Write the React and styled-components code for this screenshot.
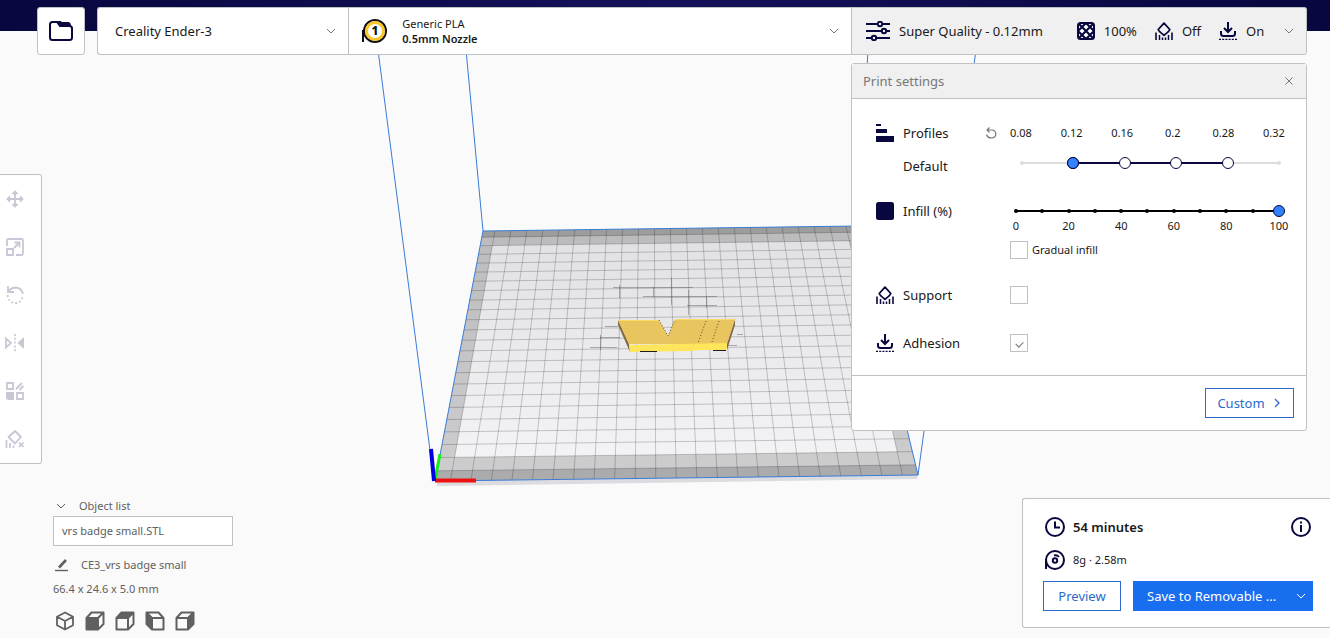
import { useState } from 'react';
import styled, { createGlobalStyle, css } from 'styled-components';

const GlobalStyle = createGlobalStyle`
  :root {
    --navy: #08073f;
    --text: #191919;
    --grey: #777777;
    --line: #c0c1c2;
    --blue: #196ef0;
    --blue-outline: #2a6acb;
    --disabled: #c7c7d6;
  }

  * {
    box-sizing: border-box;
  }

  body {
    margin: 0;
    background: #fafafa;
    color: var(--text);
    font-family: 'Noto Sans', 'Open Sans', sans-serif;
    font-size: 13px;
    line-height: 20px;
  }

  button,
  input {
    margin: 0;
    padding: 0;
    font: inherit;
    color: inherit;
  }

  button {
    border: none;
    background: none;
    cursor: pointer;
  }

  svg {
    display: block;
    flex: none;
  }
`;

/* ---------- icons ---------- */

const Svg = ({ w = 18, h = 18, children, ...rest }) => (
  <svg width={w} height={h} viewBox={`0 0 ${w} ${h}`} fill="none" stroke="currentColor" aria-hidden="true" {...rest}>
    {children}
  </svg>
);

const FolderIcon = () => (
  <Svg w={24} h={20} strokeWidth="2">
    <path d="M1 3.500Q1 1 3.500 1H8l3 4h9.500Q23 5 23 7.500V16.500Q23 19 20.500 19H3.500Q1 19 1 16.500Z" />
    <path d="M8 0H11.500L13 1H19.500Q22 1.500 22 5H11.500Z" fill="currentColor" stroke="none" />
  </Svg>
);

const ChevronIcon = () => (
  <Svg w={10} h={10}>
    <path d="M1 3l4 4 4-4" />
  </Svg>
);

const ChevronRightIcon = () => (
  <Svg w={10} h={10} strokeWidth="1.300">
    <path d="M3 1l4 4-4 4" />
  </Svg>
);

const CloseIcon = () => (
  <Svg w={10} h={10}>
    <path d="M1.500 1.500l7 7M8.500 1.500l-7 7" />
  </Svg>
);

const MaterialIcon = () => (
  <Svg w={26} h={26}>
    <path d="M1 12V24" stroke="#111" strokeWidth="2" />
    <circle cx="13" cy="13" r="11" fill="#fff" stroke="#111" strokeWidth="2" />
    <circle cx="13" cy="13" r="8.500" stroke="#fbc52c" strokeWidth="3" />
    <text x="13" y="17" textAnchor="middle" fontSize="12" fontWeight="800" fill="#111" stroke="none">
      1
    </text>
  </Svg>
);

const SlidersIcon = () => (
  <Svg w={24} h={20} strokeWidth="2">
    <path d="M0 3h11M17 3h7M0 10h15M21 10h3M0 17h5M11 17h13" />
    <circle cx="14" cy="3" r="2.200" />
    <circle cx="18" cy="10" r="2.200" />
    <circle cx="8" cy="17" r="2.200" />
  </Svg>
);

const LatticeIcon = () => (
  <Svg strokeWidth="2">
    <rect x="1" y="1" width="16" height="16" rx="2.500" fill="#fff" />
    <path d="M2 2l14 14M16 2L2 16M9 1l8 8-8 8-8-8Z" strokeWidth="2.200" />
  </Svg>
);

const SupportIcon = () => (
  <Svg>
    <path d="M9 1.200l5.800 6.300Q14 9.500 9 13.300 4 9.500 3.200 7.500Z" strokeWidth="1.800" strokeLinejoin="round" />
    <path d="M1 10.500V18M17 10.500V18" strokeWidth="1.600" />
    <path d="M4.500 13V18M7.500 15.500V18M10.500 15.500V18M13.500 13V18" strokeWidth="1.500" />
  </Svg>
);

const AdhesionIcon = () => (
  <Svg strokeWidth="2">
    <path d="M9 0V9.500M5 6l4 4 4-4M2 9V11.500Q2 14 4.500 14H13.500Q16 14 16 11.500V9" />
    <path d="M0 17.500H18" strokeDasharray="2 1.200" strokeWidth="1.600" />
  </Svg>
);

const ProfilesIcon = () => (
  <Svg fill="currentColor" stroke="none">
    <path d="M0 0h5v2H0zM0 5h11v4H0zM0 12h18v6H0z" />
  </Svg>
);

const SolidInfillIcon = () => (
  <Svg fill="currentColor" stroke="none">
    <rect width="18" height="18" rx="2.500" />
  </Svg>
);

const ResetIcon = () => (
  <Svg w={12} h={12} strokeWidth="1.200">
    <path d="M2 3H6.500Q10.800 3.200 10.800 7T6.500 11Q2.500 11 1.500 7.500M4.500 0.500L2 3 4.500 5.500" />
  </Svg>
);

const ClockIcon = () => (
  <Svg w={20} h={20} strokeWidth="2">
    <circle cx="10" cy="10" r="9" />
    <path d="M10 4.500V10.500H15" />
  </Svg>
);

const SpoolIcon = () => (
  <Svg w={20} h={20} strokeWidth="2">
    <circle cx="10" cy="10" r="9" />
    <circle cx="10" cy="10.500" r="2.200" />
    <path d="M1 9V19M9 5.500Q12 4.500 14 7" />
  </Svg>
);

const InfoIcon = () => (
  <Svg w={20} h={20} strokeWidth="2">
    <circle cx="10" cy="10" r="9" />
    <path d="M10 4.500V6.500M9 9H10V15" />
  </Svg>
);

const PencilIcon = () => (
  <Svg w={14} h={14}>
    <path d="M4 9.500L11 2" strokeWidth="2.600" />
    <path d="M0 12.500H13" strokeWidth="1.400" />
  </Svg>
);

const MoveIcon = () => (
  <Svg strokeWidth="1.800">
    <path d="M9 1.500V16.500M1.500 9H16.500M6.500 4L9 1.500 11.500 4M6.500 14L9 16.500 11.500 14M4 6.500L1.500 9 4 11.500M14 6.500L16.500 9 14 11.500" />
  </Svg>
);

const ScaleIcon = () => (
  <Svg strokeWidth="1.800">
    <path d="M1 8V2.500Q1 1 2.500 1H15.500Q17 1 17 2.500V15.500Q17 17 15.500 17H10" />
    <path d="M1 11H7V17H1ZM8 10L13.500 4.500M8.500 4.500H13.500V9.500" />
  </Svg>
);

const RotateIcon = () => (
  <Svg strokeWidth="1.800">
    <path d="M2 0V6H8M2 6Q5 1.500 10 1.500 15.500 2 17 8" />
    <path d="M1.500 9Q3 17 9 17T16.500 11" strokeDasharray="1.800 2.200" />
  </Svg>
);

const MirrorIcon = () => (
  <Svg w={20} h={18}>
    <path d="M1 4.500V13.500L6 9Z" strokeWidth="1.800" />
    <path d="M19 3V15L12.500 9Z" fill="currentColor" stroke="none" />
    <path d="M10 0V18" strokeWidth="1.600" strokeDasharray="2 1.800" />
  </Svg>
);

const PerModelIcon = () => (
  <Svg strokeWidth="1.800">
    <path d="M1 1H7V7H1ZM11 11H17V17H11ZM10 7L16 1M13.500 8L17.500 4" />
    <path d="M0 10H8V18H3Q0 18 0 15Z" fill="currentColor" stroke="none" />
  </Svg>
);

const BlockerIcon = () => (
  <Svg w={20} h={18}>
    <path d="M10 1l6 6-6 6.500L3.500 7Z" strokeWidth="1.800" strokeLinejoin="round" />
    <path d="M1.500 10V18M5 13V18M8.500 15.500V18M14 12.500l4.500 4.500M18.500 12.500L14 17" strokeWidth="1.700" />
  </Svg>
);

const cubeFaces = {
  front: 'M1.500 7H13V18.500H1.500Z',
  top: 'M1.500 7L6.500 1.500H18.500L13 7Z',
  right: 'M13 7L18.500 1.500V13L13 18.500Z',
};

const CubeIcon = ({ face, mirrored }) => (
  <Svg w={20} h={20} strokeWidth="2" strokeLinejoin="round">
    {face ? (
      <g transform={mirrored ? 'translate(20 0) scale(-1 1)' : undefined}>
        <path d="M1.500 7L6.500 1.500H18.500V13L13 18.500H1.500ZM1.500 7H13V18.500M13 7L18.500 1.500" />
        <path d={cubeFaces[face]} fill="currentColor" stroke="none" />
      </g>
    ) : (
      <path d="M10 1.500l8 4.300v8.400l-8 4.300-8-4.300V5.800ZM2 5.800L10 10l8-4.200M10 10v8.500" strokeWidth="1.800" />
    )}
  </Svg>
);

/* ---------- build plate ---------- */

const BED = 235;
const corners = { tl: [483, 231], tr: [858, 226], br: [918, 475], bl: [435, 481] };

// maps bed millimetres (origin at the back left corner) to view coordinates
const makeProjection = ({ tl, tr, br, bl }) => {
  const sx = tl[0] - tr[0] + br[0] - bl[0];
  const sy = tl[1] - tr[1] + br[1] - bl[1];
  const dx1 = tr[0] - br[0];
  const dx2 = bl[0] - br[0];
  const dy1 = tr[1] - br[1];
  const dy2 = bl[1] - br[1];
  const det = dx1 * dy2 - dx2 * dy1;
  const g = (sx * dy2 - dx2 * sy) / det;
  const h = (dx1 * sy - sx * dy1) / det;
  return (x, y) => {
    const u = x / BED;
    const v = y / BED;
    const w = g * u + h * v + 1;
    return [
      ((tr[0] - tl[0] + g * tr[0]) * u + (bl[0] - tl[0] + h * bl[0]) * v + tl[0]) / w,
      ((tr[1] - tl[1] + g * tr[1]) * u + (bl[1] - tl[1] + h * bl[1]) * v + tl[1]) / w,
    ];
  };
};

const project = makeProjection(corners);
const quad = (x1, y1, x2, y2) =>
  [project(x1, y1), project(x2, y1), project(x2, y2), project(x1, y2)].map((p) => p.join(',')).join(' ');
const segment = (a, b) => `M${a.join(' ')}L${b.join(' ')}`;

const gridSteps = Array.from({ length: 23 }, (_, i) => 7.5 + i * 10);
const gridPath = gridSteps
  .map((s) => segment(project(s, 0), project(s, BED)) + segment(project(0, s), project(BED, s)))
  .join('');

const SceneSvg = styled.svg`
  position: absolute;
  inset: 0;
  width: 100%;
  height: 100%;
`;

const Scene = () => (
  <SceneSvg viewBox="0 0 1330 638" preserveAspectRatio="xMidYMid slice" role="img" aria-label="Build plate">
    <defs>
      <linearGradient id="plate" x1="0" y1="0" x2="0" y2="1">
        <stop offset="0" stopColor="#e0e0e2" />
        <stop offset="1" stopColor="#f5f5f7" />
      </linearGradient>
    </defs>
    <path d="M436 481L918 475L917 479L437 486Z" fill="#dcdce0" />
    <polygon points={quad(0, 0, BED, BED)} fill="url(#plate)" />
    <g fill="#000" fillOpacity="0.160">
      <polygon points={quad(0, 0, BED, 17.5)} />
      <polygon points={quad(0, 217.5, BED, BED)} />
      <polygon points={quad(0, 17.5, 7.5, 217.5)} />
      <polygon points={quad(227.5, 17.5, BED, 217.5)} />
      <polygon points={quad(0, 0, BED, 7.5)} />
      <polygon points={quad(0, 227.5, BED, BED)} />
    </g>
    <path d={gridPath} stroke="#000" strokeOpacity="0.200" fill="none" />
    <path
      d="M613 287.500H693M643 296.500H717M687 305.500H717M619.500 285V298M671.500 278V305M653.500 287V297M688.500 290V315M706.500 297V308M600.500 335V350M590 347.500H617M600 337.500H620M605 326.500H618M737 334.500H743M727 345.500H737"
      stroke="#555"
      strokeOpacity="0.450"
      fill="none"
    />
    <g stroke="#3a7bd5" fill="none">
      <polygon points={quad(0, 0, BED, BED)} />
      <path d="M378 50L434 481M466 50L483 231M868 50L858 226M976 50L918 475" />
    </g>

    <g>
      <path d="M618 320L629 344L630 352L618 325Z" fill="#7d6a3e" />
      <path d="M735 319L727 343V350L735 325Z" fill="#80684a" />
      <path d="M618 320H659L668 336L675 319H735L727 344H629Z" fill="#e9c55f" />
      <path d="M629 345L727 343V349L725 350H700L690 351L630 352Z" fill="#ffe55c" />
      <path d="M619 320.500H659M675 319.500H734" stroke="#f8dc68" />
      <path d="M659 320L668 336L675 320M706 321L698 343M719 321L712 342" stroke="#5b4820" strokeDasharray="1 2" fill="none" />
      <path d="M640 351.500H657M713 350.500H726" stroke="#1c1c1c" />
    </g>

    <path d="M440 454L435 480" stroke="#12ee1c" strokeWidth="3" />
    <path d="M435 480.500H476" stroke="#ee1111" strokeWidth="4" />
    <path d="M431 449L434 481" stroke="#0000e0" strokeWidth="4" />
  </SceneSvg>
);

/* ---------- layout ---------- */

const Page = styled.main`
  position: relative;
  display: grid;
  min-height: 100vh;
  overflow: hidden;
`;

const Header = styled.header`
  grid-area: 1 / 1;
  align-self: start;
  z-index: 1;
  display: flex;
  gap: 12px;
  padding: 7px 23px 0 37px;
  background: linear-gradient(90deg, #08073f, #14125a 50%, #08073f) no-repeat top / 100% 31px;
`;

const OpenButton = styled.button`
  display: grid;
  place-items: center;
  width: 48px;
  height: 48px;
  border: 1px solid var(--line);
  border-radius: 3px;
  background: #fff;
  color: var(--navy);
`;

const StageBar = styled.div`
  flex: 1;
  display: grid;
  grid-template-columns: minmax(0, 1fr) minmax(0, 2fr) 455px;
  height: 48px;
  border: 1px solid var(--line);
  border-right: none;
  border-radius: 3px;
  background: #fff;
`;

const StageItem = styled.button`
  display: flex;
  align-items: center;
  width: 100%;
  height: 100%;
  padding: 0 12px 0 ${({ $inset }) => $inset || 17}px;
  text-align: left;
  border-right: 1px solid var(--line);

  > svg:last-child {
    margin-left: auto;
    color: var(--grey);
  }

  ${({ $active }) =>
    $active &&
    css`
      background: #f0f0f0;
      border-radius: 0 3px 3px 0;
    `}
`;

const MaterialText = styled.span`
  display: flex;
  flex-direction: column;
  margin-left: 14px;
  font-size: 11px;
  line-height: 15px;

  strong {
    font-weight: 600;
  }
`;

const SettingsArea = styled.div`
  position: relative;
`;

const SummaryItem = styled.span`
  display: flex;
  align-items: center;
  gap: 9px;
  margin-left: ${({ $gap }) => $gap || 0}px;
  white-space: nowrap;

  svg {
    color: var(--navy);
  }
`;

const Panel = styled.section`
  position: absolute;
  top: calc(100% + 9px);
  left: -1px;
  right: 0;
  border: 1px solid var(--line);
  border-radius: 3px;
  background: #fff;
`;

const PanelHeader = styled.div`
  display: flex;
  align-items: center;
  justify-content: space-between;
  height: 35px;
  padding: 0 12px 0 11px;
  border-bottom: 1px solid var(--line);
  background: #f0f0f0;
  color: var(--grey);
`;

const PanelBody = styled.div`
  display: flex;
  flex-direction: column;
  gap: 25px;
  padding: 24px 21px 22px 24px;
`;

const PanelFooter = styled.div`
  display: flex;
  justify-content: flex-end;
  padding: 12px;
  border-top: 1px solid var(--line);
`;

const SettingRow = styled.div`
  display: grid;
  grid-template-columns: 18px 1fr 12px 275px;
  column-gap: 9px;
  align-items: start;

  > svg {
    margin-top: 1px;
    color: var(--navy);
  }
`;

const Labels = styled.div`
  display: flex;
  flex-direction: column;
  gap: 13px;
`;

const ResetButton = styled.button`
  display: grid;
  place-items: center;
  justify-self: end;
  width: 12px;
  height: 20px;
  margin-right: 4px;
  color: var(--grey);
`;

const Field = styled.div`
  grid-column: 4;
`;

const Steps = styled.div`
  display: flex;
  justify-content: space-between;
  font-size: 11px;
  line-height: ${({ $height }) => $height}px;

  span {
    flex: 0 0 22px;
    text-align: center;
  }
`;

const InfillSteps = styled(Steps)`
  span {
    flex-basis: 12px;
    min-width: 0;
    display: flex;
    justify-content: center;
  }
`;

const SliderBox = styled.div`
  display: grid;
  align-items: center;
  height: 20px;
  margin: ${({ $margin }) => $margin || '0'};

  > * {
    grid-area: 1 / 1;
  }
`;

const Track = styled.div`
  display: flex;
  align-items: center;
  justify-content: space-between;
  height: 12px;
  padding: 0 ${({ $pad }) => $pad}px;
  background: ${({ $fill }) => $fill} no-repeat center / calc(100% - 12px) 2px;
`;

const Dot = styled.i`
  width: 4px;
  height: 4px;
  border-radius: 50%;
  background: ${({ $color }) => $color || '#000'};
`;

const Stop = styled.i`
  display: grid;
  place-items: center;
  width: 12px;
  height: 12px;

  ${({ $open }) =>
    $open &&
    css`
      border: 1px solid var(--navy);
      border-radius: 50%;
      background: #fff;
    `}
`;

const Range = styled.input`
  appearance: none;
  width: 100%;
  height: 12px;
  background: transparent;
  cursor: pointer;

  &::-webkit-slider-runnable-track {
    height: 12px;
  }

  &::-webkit-slider-thumb {
    appearance: none;
    width: 12px;
    height: 12px;
    border: 1px solid var(--navy);
    border-radius: 50%;
    background: #3282ff;
  }
`;

const CheckRow = styled.label`
  display: flex;
  align-items: center;
  gap: 4px;
  height: 20px;
  margin-top: ${({ $top }) => $top || 0}px;
  font-size: 11px;
`;

const Checkbox = styled.input`
  appearance: none;
  display: grid;
  place-items: center;
  width: 18px;
  height: 18px;
  border: 1px solid var(--line);
  background: #fff;

  &:checked::after {
    content: '';
    width: 6px;
    height: 4px;
    border: solid var(--grey);
    border-width: 0 0 1px 1px;
    transform: rotate(-45deg);
  }
`;

const CheckSettings = styled.div`
  display: grid;
  gap: 28px;
`;

const OutlineButton = styled.button`
  display: flex;
  align-items: center;
  justify-content: center;
  gap: 7px;
  width: ${({ $width }) => $width}px;
  height: 30px;
  border: 1px solid var(--blue-outline);
  background: #fff;
  color: var(--blue-outline);
`;

const Toolbar = styled.nav`
  grid-area: 1 / 1;
  align-self: center;
  justify-self: start;
  position: relative;
  width: 42px;
  border: 1px solid var(--line);
  border-left: none;
  border-radius: 0 3px 3px 0;
  background: #fff;
  color: var(--disabled);
`;

const ToolButton = styled.button`
  display: grid;
  place-items: center;
  width: 30px;
  height: 48px;
`;

const Footer = styled.footer`
  grid-area: 1 / 1;
  align-self: end;
  position: relative;
  display: flex;
  align-items: flex-end;
  justify-content: space-between;
  padding-left: 53px;
`;

const ObjectInfo = styled.section`
  width: 180px;
  padding-bottom: 7px;
  color: #606060;
  font-size: 11px;
`;

const InfoLine = styled.div`
  display: flex;
  align-items: center;
  gap: ${({ $gap }) => $gap || 0}px;
  padding-left: 2px;
`;

const ListToggle = styled.button`
  display: flex;
  align-items: center;
  gap: 13px;
  padding-left: 3px;
`;

const ObjectEntry = styled.button`
  display: block;
  width: 100%;
  height: 30px;
  margin-bottom: 9px;
  padding-left: 8px;
  border: 1px solid var(--line);
  background: #fff;
  text-align: left;
`;

const Dimensions = styled.div`
  margin: 4px 0 12px;
`;

const ActionPanel = styled.section`
  display: flex;
  flex-direction: column;
  width: 308px;
  margin-bottom: 10px;
  padding: 18px 17px 16px 20px;
  border: 1px solid var(--line);
  border-right: none;
  border-radius: 3px 0 0 3px;
  background: #fff;
`;

const Estimate = styled.div`
  display: flex;
  align-items: center;
  gap: 8px;
  padding: 0 2px;
  margin-bottom: ${({ $bottom }) => $bottom}px;
  font-size: ${({ $small }) => ($small ? 11 : 13)}px;

  strong {
    flex: 1;
    font-weight: 600;
  }

  svg {
    color: var(--navy);
  }
`;

const Actions = styled.div`
  display: flex;
  gap: 12px;
`;

const SaveGroup = styled.div`
  flex: 1;
  display: flex;
  background: var(--blue);
  color: #fff;
`;

const SaveButton = styled.button`
  flex: 1;
  padding-left: 14px;
  text-align: left;
  white-space: nowrap;
`;

const SaveMenuButton = styled.button`
  display: grid;
  place-items: center;
  width: 24px;
`;

/* ---------- screens ---------- */

const profiles = ['0.08', '0.12', '0.16', '0.2', '0.28', '0.32'];

const profileTrack =
  'linear-gradient(90deg, #dcdcdc 20%, #08073f 20%, #08073f 80%, #dcdcdc 80%)';

const PrintSettings = ({ onClose }) => {
  const [profile, setProfile] = useState(1);
  const [infill, setInfill] = useState(100);

  return (
    <Panel>
      <PanelHeader>
        Print settings
        <button aria-label="Close" onClick={onClose}>
          <CloseIcon />
        </button>
      </PanelHeader>
      <PanelBody>
        <SettingRow>
          <ProfilesIcon />
          <Labels>
            <label htmlFor="profile">Profiles</label>
            <span>Default</span>
          </Labels>
          <ResetButton aria-label="Reset profile">
            <ResetIcon />
          </ResetButton>
          <Field>
            <Steps $height={20}>
              {profiles.map((p) => (
                <span key={p}>{p}</span>
              ))}
            </Steps>
            <SliderBox $margin="10px 0 0 6px">
              <Track $pad={0} $fill={profileTrack}>
                {profiles.map((p, i) => {
                  const end = i === 0 || i === profiles.length - 1;
                  return (
                    <Stop key={p} $open={!end}>
                      {end && <Dot $color="#dcdcdc" />}
                    </Stop>
                  );
                })}
              </Track>
              <Range
                id="profile"
                type="range"
                min="0"
                max="5"
                value={profile}
                onChange={(e) => setProfile(Number(e.target.value))}
              />
            </SliderBox>
          </Field>
        </SettingRow>

        <SettingRow>
          <SolidInfillIcon />
          <label htmlFor="infill">Infill (%)</label>
          <Field>
            <SliderBox>
              <Track $pad={4} $fill="linear-gradient(#000, #000)">
                {Array.from({ length: 11 }, (_, i) => (
                  <Dot key={i} />
                ))}
              </Track>
              <Range
                id="infill"
                type="range"
                min="0"
                max="100"
                step="10"
                value={infill}
                onChange={(e) => setInfill(Number(e.target.value))}
              />
            </SliderBox>
            <InfillSteps $height={10}>
              {[0, 20, 40, 60, 80, 100].map((n) => (
                <span key={n}>{n}</span>
              ))}
            </InfillSteps>
            <CheckRow $top={9}>
              <Checkbox type="checkbox" />
              Gradual infill
            </CheckRow>
          </Field>
        </SettingRow>

        <CheckSettings>
          <SettingRow>
            <SupportIcon />
            <label htmlFor="support">Support</label>
            <Field>
              <CheckRow as="div">
                <Checkbox id="support" type="checkbox" />
              </CheckRow>
            </Field>
          </SettingRow>
          <SettingRow>
            <AdhesionIcon />
            <label htmlFor="adhesion">Adhesion</label>
            <Field>
              <CheckRow as="div">
                <Checkbox id="adhesion" type="checkbox" defaultChecked />
              </CheckRow>
            </Field>
          </SettingRow>
        </CheckSettings>
      </PanelBody>
      <PanelFooter>
        <OutlineButton $width={89}>
          Custom
          <ChevronRightIcon />
        </OutlineButton>
      </PanelFooter>
    </Panel>
  );
};

const tools = [
  { name: 'Move', Icon: MoveIcon },
  { name: 'Scale', Icon: ScaleIcon },
  { name: 'Rotate', Icon: RotateIcon },
  { name: 'Mirror', Icon: MirrorIcon },
  { name: 'Per model settings', Icon: PerModelIcon },
  { name: 'Support blocker', Icon: BlockerIcon },
];

const views = [
  { name: '3D view' },
  { name: 'Front view', face: 'front' },
  { name: 'Top view', face: 'top' },
  { name: 'Left view', face: 'right', mirrored: true },
  { name: 'Right view', face: 'right' },
];

const App = () => {
  const [settingsOpen, setSettingsOpen] = useState(true);

  return (
    <Page>
      <GlobalStyle />
      <Scene />

      <Header>
        <OpenButton aria-label="Open file">
          <FolderIcon />
        </OpenButton>
        <StageBar>
          <StageItem>
            Creality Ender-3
            <ChevronIcon />
          </StageItem>
          <StageItem $inset={13}>
            <MaterialIcon />
            <MaterialText>
              <span>Generic PLA</span>
              <strong>0.5mm Nozzle</strong>
            </MaterialText>
            <ChevronIcon />
          </StageItem>
          <SettingsArea>
            <StageItem $active $inset={14} onClick={() => setSettingsOpen(!settingsOpen)}>
              <SummaryItem>
                <SlidersIcon />
                Super Quality - 0.12mm
              </SummaryItem>
              <SummaryItem $gap={34}>
                <LatticeIcon />
                100%
              </SummaryItem>
              <SummaryItem $gap={18}>
                <SupportIcon />
                Off
              </SummaryItem>
              <SummaryItem $gap={18}>
                <AdhesionIcon />
                On
              </SummaryItem>
              <ChevronIcon />
            </StageItem>
            {settingsOpen && <PrintSettings onClose={() => setSettingsOpen(false)} />}
          </SettingsArea>
        </StageBar>
      </Header>

      <Toolbar aria-label="Tools">
        {tools.map(({ name, Icon }) => (
          <ToolButton key={name} aria-label={name}>
            <Icon />
          </ToolButton>
        ))}
      </Toolbar>

      <Footer>
        <ObjectInfo>
          <ListToggle>
            <ChevronIcon />
            Object list
          </ListToggle>
          <ObjectEntry>vrs badge small.STL</ObjectEntry>
          <InfoLine $gap={12}>
            <button aria-label="Rename project">
              <PencilIcon />
            </button>
            CE3_vrs badge small
          </InfoLine>
          <Dimensions>66.4 x 24.6 x 5.0 mm</Dimensions>
          <InfoLine $gap={10}>
            {views.map(({ name, ...icon }) => (
              <button key={name} aria-label={name}>
                <CubeIcon {...icon} />
              </button>
            ))}
          </InfoLine>
        </ObjectInfo>

        <ActionPanel>
          <Estimate $bottom={13}>
            <ClockIcon />
            <strong>54 minutes</strong>
            <button aria-label="Print time details">
              <InfoIcon />
            </button>
          </Estimate>
          <Estimate $small $bottom={11}>
            <SpoolIcon />
            8g · 2.58m
          </Estimate>
          <Actions>
            <OutlineButton $width={78}>Preview</OutlineButton>
            <SaveGroup>
              <SaveButton>Save to Removable ...</SaveButton>
              <SaveMenuButton aria-label="More outputs">
                <ChevronIcon />
              </SaveMenuButton>
            </SaveGroup>
          </Actions>
        </ActionPanel>
      </Footer>
    </Page>
  );
};

export default App;
